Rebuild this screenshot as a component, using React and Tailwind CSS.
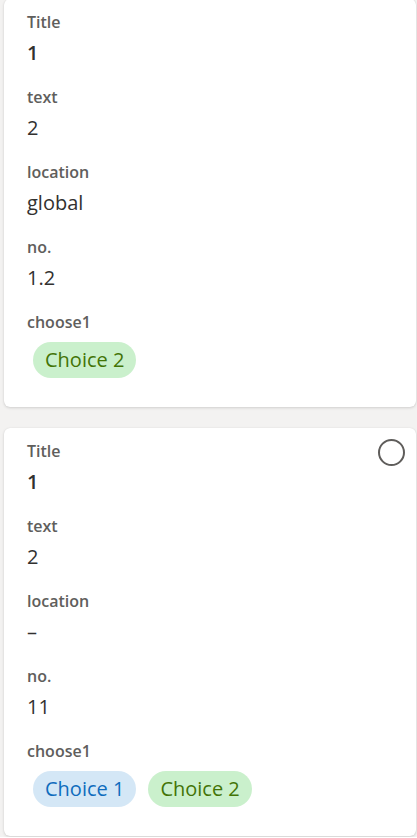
const cards = [
  {
    id: 1,
    title: '1',
    text: '2',
    location: 'global',
    no: '1.2',
    choices: ['Choice 2'],
    selectable: false,
  },
  {
    id: 2,
    title: '1',
    text: '2',
    location: '–',
    no: '11',
    choices: ['Choice 1', 'Choice 2'],
    selectable: true,
  },
];

const pillStyles = {
  'Choice 1': 'bg-[#d4e7f6] text-[#0f6cbd]',
  'Choice 2': 'bg-[#caf0cc] text-[#437406]',
};

function Label({ children }) {
  return <div className="text-[16px] leading-[20px] font-semibold text-[#605e5c]">{children}</div>;
}

function Field({ label, value, strong }) {
  return (
    <div className="mb-[21px]">
      <Label>{label}</Label>
      <div
        className={`mt-[8px] text-[20px] leading-[26px] text-[#323130] ${strong ? 'font-semibold' : ''}`}
      >
        {value}
      </div>
    </div>
  );
}

function Card({ item }) {
  return (
    <div className="bg-white rounded-[6px] shadow-[0_1px_3px_rgba(0,0,0,0.14),0_0_1px_rgba(0,0,0,0.1)] pl-[23px] pr-[11px] pt-[13px] pb-[29px]">
      <div className="flex items-start justify-between">
        <Field label="Title" value={item.title} strong />
        {item.selectable && (
          <div className="w-[27px] h-[27px] -mt-[2px] rounded-full border-2 border-[#5f5d5b]" />
        )}
      </div>
      <Field label="text" value={item.text} />
      <Field label="location" value={item.location} />
      <Field label="no." value={item.no} />
      <Label>choose1</Label>
      <div className="mt-[10px] ml-[6px] flex gap-[12px]">
        {item.choices.map((c) => (
          <span
            key={c}
            className={`h-[36px] px-[12px] rounded-full flex items-center text-[20px] ${pillStyles[c]}`}
          >
            {c}
          </span>
        ))}
      </div>
    </div>
  );
}

export default function App() {
  return (
    <div
      className="min-h-[838px] bg-[#f3f2f1] pl-[4px] pr-[1px] -mt-[1px] flex flex-col gap-[21px]"
      style={{ fontFamily: '"Open Sans", "Noto Sans", sans-serif' }}
    >
      {cards.map((item) => (
        <Card key={item.id} item={item} />
      ))}
    </div>
  );
}
